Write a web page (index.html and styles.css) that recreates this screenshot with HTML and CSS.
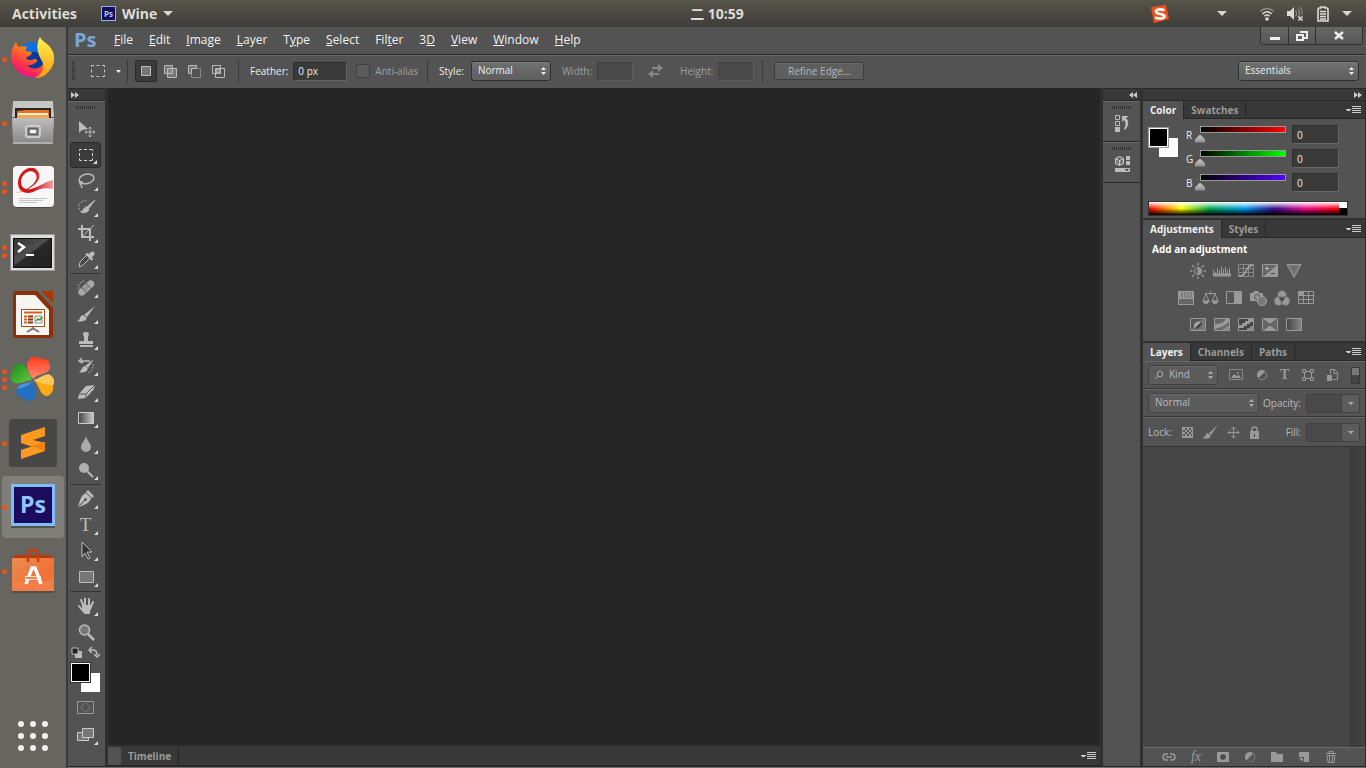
FILE: index.html
```html
<!DOCTYPE html>
<html lang="en">
<head>
  <meta charset="UTF-8">
  <meta name="viewport" content="width=device-width, initial-scale=1.0">
  <title>Photoshop</title>
  <link rel="stylesheet" href="styles.css">
</head>
<body>
  <!-- system bar -->
  <header class="topbar">
    <div class="topbar_left">
      <button class="top_btn">Activities</button>
      <button class="top_btn top_app">
        <svg width="15" height="15" viewBox="0 0 15 15"><rect x=".5" y=".5" width="14" height="14" fill="#170b5c" stroke="#7fb8f5"/><text x="3" y="11" font-size="8" font-weight="700" fill="#9ccbff">Ps</text></svg>
        Wine
        <svg width="10" height="5" viewBox="0 0 10 5"><path d="M0 0h10L5 5z" fill="#d8d6d0"/></svg>
      </button>
    </div>
    <div class="clock">二 10:59</div>
    <div class="topbar_right">
      <svg class="tray_sogou" width="18" height="18" viewBox="0 0 18 18"><path d="M0 2 15 0l3 14-15 4z" fill="#f0501e"/><path d="M13.5 5.200C9 3.500 4.500 4.500 5 7s8.500 1.500 8.500 4.200c0 2.300-5 3-9.500 1.300" fill="none" stroke="#fff" stroke-width="2.600"/></svg>
      <svg class="tray_caret" width="10" height="5" viewBox="0 0 10 5"><path d="M0 0h10L5 5z" fill="#d8d6d0"/></svg>
      <svg width="14" height="14" viewBox="0 0 14 14" fill="none" stroke-width="1.500"><path d="M.5 4.500c3.500-4 9.500-4 13 0" stroke="#8b8981"/><path d="M2.500 7c2.500-3 6.500-3 9 0M4.500 9.300c1.500-1.600 3.500-1.600 5 0" stroke="#dfdcd6"/><circle cx="7" cy="12" r="1.800" fill="#dfdcd6"/></svg>
      <svg width="17" height="16" viewBox="0 0 17 16" fill="none"><path d="M0 5h3l4-4v13l-4-4H0z" fill="#dfdcd6"/><path d="M8.500 4.500c1.500 2 1.500 4 0 6M11 2.500c2 3 2 6 0 9M13.500 1c2 3 2 6 1 8" stroke="#8b8981" stroke-width="1.300"/><path d="m11.500 10.500 4 4m0-4-4 4" stroke="#dfdcd6" stroke-width="1.600"/></svg>
      <svg width="12" height="16" viewBox="0 0 12 16" fill="none" stroke="#dfdcd6"><path d="M4 2V1h4v1h2l1 1v12H1V3l1-1z" stroke-width="1.600"/><path d="M3 5.500h6M3 8h6M3 10.500h6M3 13h6" stroke-width="1.300"/></svg>
      <svg width="10" height="5" viewBox="0 0 10 5"><path d="M0 0h10L5 5z" fill="#d8d6d0"/></svg>
    </div>
  </header>

  <div class="desktop">
    <!-- launcher -->
    <nav class="dock" aria-label="Launcher">
      <button class="dock_item" aria-label="Firefox">
        <span class="dots"><i></i></span>
        <svg width="48" height="48" viewBox="0 0 48 48">
          <defs>
            <linearGradient id="fx" x1=".8" y1="0" x2=".2" y2="1"><stop offset="0" stop-color="#ffd52e"/><stop offset=".4" stop-color="#ff7a1a"/><stop offset=".75" stop-color="#ff2b50"/><stop offset="1" stop-color="#d9108f"/></linearGradient>
            <linearGradient id="fy" x1="0" y1="0" x2="0" y2="1"><stop offset="0" stop-color="#fff44f"/><stop offset="1" stop-color="#ff9a10"/></linearGradient>
          </defs>
          <circle cx="24" cy="25" r="18" fill="#0a72e0"/><circle cx="25" cy="28" r="11" fill="#063a98"/>
          <path d="M2 22C2 15 5 10 7 7c1 2 1 4 3 5 3-1 6-1 8 0 0 1-2 2-1 4 2 1 5 0 6 2-1 3-4 3-6 5 2 3 5 2 9 1 3 0 3 3 0 4-2 1-4 3-8 2 5 6 17 5 18-7 1-7-5-11-4-18 5 4 13 11 13 22a22 22 0 0 1-43-5z" fill="url(#fx)"/>
          <path d="M31 2c1 4 10 7 13 15 3 8 0 17-8 23-4 3-8 3-10 3 8-4 10-12 7-17-4-6-7-16-2-24z" fill="url(#fy)"/>
        </svg>
      </button>
      <button class="dock_item" aria-label="Files">
        <span class="dots"><i></i></span>
        <svg width="48" height="48" viewBox="0 0 48 48">
          <defs><linearGradient id="fl" x1="0" y1="0" x2="0" y2="1"><stop offset="0" stop-color="#bdbdbd"/><stop offset="1" stop-color="#878787"/></linearGradient></defs>
          <path d="M4 3q0-1 1-1h38q1 0 1 1l1 15H3z" fill="#c6c6c4"/><path d="M6 9h36v10H6z" fill="#252525"/><path d="M8 12l8-1h24v7H8z" fill="#e8711f"/><path d="M9 14h30v5H9z" fill="#fff0d0"/><path d="M8 16h32v4H8z" fill="#f3a650"/>
          <path d="M3 19h42l-1 26H4z" fill="url(#fl)"/><path d="M4 44h40" stroke="#d5d5d5"/><rect x="17" y="27" width="14" height="11" rx="2" fill="#8e8e8e" stroke="#ccc" stroke-width="2"/><rect x="20" y="30" width="8" height="5" fill="#f3f3f3" stroke="#333"/>
        </svg>
      </button>
      <button class="dock_item" aria-label="Document Viewer">
        <span class="dots"><i></i><i></i></span>
        <svg width="48" height="48" viewBox="0 0 48 48">
          <defs><linearGradient id="ev"><stop offset="0" stop-color="#d80f12"/><stop offset=".5" stop-color="#cf1b1f"/><stop offset="1" stop-color="#f2a0a0"/></linearGradient></defs>
          <rect x="4" y="3" width="41" height="42" rx="5" fill="#4b4a46"/><rect x="4" y="3" width="41" height="41" rx="4" fill="#f6f6f6"/>
          <path d="M7 30c12-3 25-12 19-20-5-5-14 1-14 9 0 7 7 9 13 6 8-3 11-6 19-8v9c-9-2-14 0-20 3-8 3-15-1-15-9C9 8 22 1 28 7c9 10-8 21-21 23z" fill="url(#ev)"/>
          <path d="M10 35.500h28M10 37.500h24M10 39.500h18" stroke="#c6c6c6"/>
        </svg>
      </button>
      <button class="dock_item" aria-label="Terminal">
        <span class="dots"><i></i><i></i></span>
        <svg width="48" height="48" viewBox="0 0 48 48">
          <defs><linearGradient id="tm" x1="0" y1="0" x2="1" y2="1"><stop offset="0" stop-color="#333"/><stop offset=".45" stop-color="#505050"/><stop offset=".5" stop-color="#292929"/><stop offset="1" stop-color="#202020"/></linearGradient></defs>
          <rect x="1" y="7" width="45" height="37" fill="#999"/><rect x="2" y="8" width="43" height="35" fill="#dcdcdc"/><rect x="4" y="11" width="39" height="30" fill="#111"/><rect x="5" y="12" width="37" height="28" fill="url(#tm)"/>
          <path d="m9 16 6 4-6 5" fill="none" stroke="#fff" stroke-width="2.500"/><path d="M17 28h8" stroke="#fff" stroke-width="2"/>
        </svg>
      </button>
      <button class="dock_item" aria-label="Impress">
        <span class="dots"></span>
        <svg width="48" height="48" viewBox="0 0 48 48">
          <path d="M4 2q0-2 2-2h22l16 17v27q0 3-3 3H7q-3 0-3-3z" fill="#8c3107"/><path d="M32 0h12v12z" fill="#a43a03"/><path d="M7 4h19l14 15v25H7z" fill="#f7f5f2"/>
          <rect x="12.500" y="18.500" width="23" height="17" fill="#fff" stroke="#a64a18"/><path d="M15 21.500h18" stroke="#e05a18" stroke-width="2"/><path d="M15 25.500h3M15 28.500h3M15 31.500h3" stroke="#e05a18" stroke-width="2"/><path d="M19 25.500h5M19 28.500h5M19 31.500h5" stroke="#8c3107" stroke-width="2"/><path d="M26 25h7v7h-7z" fill="none" stroke="#888"/><path d="m27 30 2-2 2 1 2-3" fill="none" stroke="#2ca02c" stroke-width="1.500"/><path d="m18 41 5-3 1-1 1 1 5 3" fill="none" stroke="#777" stroke-width="2"/>
        </svg>
      </button>
      <button class="dock_item" aria-label="Clover">
        <span class="dots"><i></i><i></i><i></i></span>
        <svg width="48" height="48" viewBox="0 0 48 48">
          <defs>
            <linearGradient id="c1" x1="0" y1="0" x2="0" y2="1"><stop offset="0" stop-color="#ff3c1c"/><stop offset="1" stop-color="#ff8c70"/></linearGradient>
            <linearGradient id="c2" x1="0" y1="0" x2="1" y2="1"><stop offset="0" stop-color="#129010"/><stop offset="1" stop-color="#6cc84c"/></linearGradient>
          </defs>
          <path d="M24 24C19 18 16 9 20 5c3-4 8-4 11-1 6-2 11 3 10 9-2 7-12 5-17 11z" fill="url(#c1)"/>
          <path d="M23 25C20 18 17 10 12 9 7 8 3 12 4 17c-4 2-3 9 1 11 6 2 13-3 18-3z" fill="url(#c2)"/>
          <path d="M25 25c5-1 11-7 16-5 4 2 5 7 3 11 1 5-2 9-6 10-7 0-7-10-13-16z" fill="#fbab16"/><path d="M25 25c5-1 11-7 16-5 4 2 5 7 3 10-7-1-13-1-19-5z" fill="#ffc65a"/>
          <path d="M24 26c-6 3-15 2-16 8-2 5 2 8 6 9 3 4 10 4 12 0 3-5-2-11-2-17z" fill="#236fc4"/><path d="M24 26c-6 3-15 2-16 8 7-1 12-3 16-8z" fill="#4b91dd"/>
        </svg>
      </button>
      <button class="dock_item" aria-label="Sublime Text">
        <span class="dots"><i></i></span>
        <svg width="48" height="48" viewBox="0 0 48 48">
          <rect width="48" height="48" rx="3" fill="#474747"/><path d="m12 31 24-8v9l-24 8z" fill="#ff9920"/><path d="m12 16 24-8v9l-12 4 12 3v8l-24-8z" fill="#ff9920"/><path d="m22 27 14-4v9z" fill="#e98510"/>
        </svg>
      </button>
      <button class="dock_item dock_on" aria-label="Photoshop">
        <span class="dots"><i></i></span>
        <svg width="48" height="48" viewBox="0 0 48 48">
          <rect x="2" y="2" width="44" height="43" fill="#55534e"/><rect x="2" y="1" width="44" height="42" fill="#7fbcfb"/><rect x="5" y="4" width="38" height="36" fill="#1b0c5d"/><text x="11" y="30" font-size="23" font-weight="700" fill="#8ec6ff">Ps</text>
        </svg>
      </button>
      <button class="dock_item" aria-label="Software">
        <span class="dots"><i></i></span>
        <svg width="48" height="48" viewBox="0 0 48 48">
          <defs><linearGradient id="sw" x1="0" y1="0" x2="1" y2="1"><stop offset="0" stop-color="#e88f51"/><stop offset=".6" stop-color="#f17135"/><stop offset="1" stop-color="#f0793f"/></linearGradient></defs>
          <path d="M3 44h42v2H3z" fill="#514f4a"/><path d="m3 11 4-3h34l4 3z" fill="#b8380a"/><path d="M3 11h42v33H3z" fill="url(#sw)"/>
          <path d="M19 15V7q0-4 5-4t5 4v8" fill="none" stroke="#c43f10" stroke-width="2.500"/><path d="M3 34h42v10H3z" fill="#f58450" opacity=".6"/>
          <path d="m17 37 6-16h3l6 16M16 31h16" fill="none" stroke="#fff" stroke-width="3.500"/><path d="M17 31h11" stroke="#e85a18" stroke-width="1.500"/>
        </svg>
      </button>
      <button class="dock_apps" aria-label="Show Applications">
        <i></i><i></i><i></i><i></i><i></i><i></i><i></i><i></i><i></i>
      </button>
    </nav>

    <main class="app">
      <!-- menu -->
      <div class="menubar">
        <span class="logo">Ps</span>
        <nav class="menu">
          <a href="#"><u>F</u>ile</a>
          <a href="#"><u>E</u>dit</a>
          <a href="#"><u>I</u>mage</a>
          <a href="#"><u>L</u>ayer</a>
          <a href="#">T<u>y</u>pe</a>
          <a href="#"><u>S</u>elect</a>
          <a href="#">Fil<u>t</u>er</a>
          <a href="#">3<u>D</u></a>
          <a href="#"><u>V</u>iew</a>
          <a href="#"><u>W</u>indow</a>
          <a href="#"><u>H</u>elp</a>
        </nav>
        <div class="win_btns">
          <button aria-label="Minimize"><svg width="12" height="12"><path d="M1 7h10v3H1z" fill="#eee"/></svg></button>
          <button aria-label="Restore"><svg width="12" height="12" fill="none" stroke="#eee" stroke-width="2"><path d="M5 3V2h6v6H8M1 5h6v5H1z"/></svg></button>
          <button class="win_close" aria-label="Close"><svg width="12" height="12" stroke="#eee" stroke-width="2.500"><path d="m2 2 8 7m0-7-8 7"/></svg></button>
        </div>
      </div>

      <!-- options -->
      <div class="options">
        <span class="grip_v"></span>
        <button class="opt_tool" aria-label="Tool preset">
          <svg width="16" height="16" fill="none" stroke="#ccc"><path d="M1.500 4V2.500H4M6.500 2.500h3M12 2.500h2.500V4M14.500 6.500v3M14.500 12v1.500H12M9.500 13.500h-3M4 13.500H1.500V12M1.500 9.500v-3"/></svg>
          <svg width="5" height="3"><path d="M0 0h5L2.500 3z" fill="#eee"/></svg>
        </button>
        <div class="modes">
          <button class="on" aria-label="New selection"><svg width="14" height="14"><path d="M2.500 2.500h9v9h-9z" fill="#777" stroke="#bbb"/></svg></button>
          <button aria-label="Add to selection"><svg width="14" height="14" stroke="#bbb"><path d="M1.500 1.500h8v3h4v9h-9v-4h-3z" fill="#777"/><path d="M4.500 9.500v-5h5v5z" fill="#888"/></svg></button>
          <button aria-label="Subtract from selection"><svg width="14" height="14" fill="none"><path d="M9.500 4.500h4v9h-9v-4" stroke="#888"/><path d="M4.500 9.500h-3v-8h8v3h-5z" fill="#777" stroke="#bbb"/></svg></button>
          <button aria-label="Intersect with selection"><svg width="14" height="14" fill="none" stroke="#bbb"><path d="M1.500 1.500h8v8h-8zM4.500 4.500h9v9h-9z"/><path d="M5 5h4v4H5z" fill="#888"/></svg></button>
        </div>
        <label class="opt_label" for="feather">Feather:</label>
        <input class="field feather" id="feather" type="text" value="0 px">
        <label class="check off"><input type="checkbox" disabled>Anti-alias</label>
        <span class="vsep"></span>
        <label class="opt_label" for="style">Style:</label>
        <select class="select style_select" id="style"><option>Normal</option></select>
        <label class="opt_label off" for="w">Width:</label>
        <input class="field size" id="w" type="text" disabled>
        <button class="swap" aria-label="Swap width and height" disabled><svg width="15" height="14" fill="#888"><path d="M4 3h6V0l5 4-5 4V5H4zM11 11H5v3l-5-4 5-4v3h6z"/></svg></button>
        <label class="opt_label off" for="h">Height:</label>
        <input class="field size" id="h" type="text" disabled>
        <span class="vsep vsep_near"></span>
        <button class="refine" disabled>Refine Edge...</button>
        <select class="select workspace_select" aria-label="Workspace"><option>Essentials</option></select>
      </div>

      <div class="workspace">
        <!-- toolbox -->
        <aside class="toolbox">
          <div class="dock_head"><svg width="8" height="6" fill="#ccc"><path d="M0 0l4 3-4 3zM4 0l4 3-4 3z"/></svg></div>
          <div class="tool_body">
            <span class="grip_h"></span>
            <div class="tools">
              <button class="tool plain" aria-label="Move"><svg width="20" height="20"><path d="M3 2v12l3-3 6-1z" fill="#bbb"/><path d="M14 8v10M9 13h10M12.500 9.500 14 8l1.500 1.500M12.500 16.500 14 18l1.500-1.500M10.500 11.500 9 13l1.500 1.500M17.500 11.500 19 13l-1.500 1.500" fill="none" stroke="#bbb"/></svg></button>
              <button class="tool on" aria-label="Marquee"><svg width="20" height="20" fill="none" stroke="#ccc"><path d="M3.500 6V4.500H6M8 4.500h3M13 4.500h3.500V6M16.500 8v3M16.500 13v2.500H13M11 15.500H8M6 15.500H3.500V13M3.500 11V8"/></svg></button>
              <button class="tool" aria-label="Lasso"><svg width="20" height="20" fill="none" stroke="#bbb" stroke-width="1.500"><ellipse cx="10.500" cy="8" rx="7.500" ry="4.700" transform="rotate(-12 10 8)"/><path d="M4 10c-2 2 2 4 2 1-2-1-3 2-1 3l1 3"/></svg></button>
              <button class="tool" aria-label="Quick Selection"><svg width="20" height="20"><path d="M10 4c-4-1-8 2-7 7 0 3 3 5 6 5" fill="none" stroke="#bbb" stroke-dasharray="1.500 1.500"/><path d="m19 3-6 8-2-1zM11 10l2 2c-1 4-5 4-8 3 3-1 2-5 6-5z" fill="#bbb" stroke="#bbb"/></svg></button>
              <button class="tool" aria-label="Crop"><svg width="20" height="20" fill="none" stroke="#bbb" stroke-width="2"><path d="M6 2v12h12M2 6h12v12"/><path d="m6 14 12-12" stroke-width="1"/></svg></button>
              <button class="tool" aria-label="Eyedropper"><svg width="20" height="20"><path d="m11 6-7 7-1 5 4-2 7-7" fill="#444" stroke="#bbb"/><path d="m9 5 2-1 2 1c2-3 4-3 5-2s1 3-2 5l1 2-1 2z" fill="#bbb"/></svg></button>
            </div>
            <div class="tools">
              <button class="tool" aria-label="Spot Healing"><svg width="20" height="20"><path d="M8 3c-5 1-7 6-4 11" fill="none" stroke="#bbb" stroke-dasharray="1.500 1.500"/><g transform="rotate(-43 11 10)"><rect x="1" y="6" width="19" height="7" rx="3.500" fill="#aaa"/><path d="M7.500 6v7M13.500 6v7" stroke="#666"/><path d="M9 8.500h3M9 10.500h3" stroke="#555" stroke-dasharray="1 1"/></g></svg></button>
              <button class="tool" aria-label="Brush"><svg width="20" height="20" fill="#bbb"><path d="m19 2-8 11-3-2zM7 11l4 3c-2 4-6 4-10 3 4-1 2-5 6-6z"/></svg></button>
              <button class="tool" aria-label="Clone Stamp"><svg width="20" height="20" fill="#bbb"><path d="M10 2c4 0 3 3 2 5v4h5v3H3v-3h5V7C7 5 6 2 10 2zM4 15h13v2H4z"/></svg></button>
              <button class="tool" aria-label="History Brush"><svg width="20" height="20"><path d="M3 5h11M6 2 3 5l4 2" fill="none" stroke="#bbb" stroke-width="1.500"/><path d="m18 3-6 9-3-2zM9 10l3 3c-2 4-6 4-9 3 3-1 2-5 6-6z" fill="#bbb"/><path d="M17 8c0 5-1 7-5 9" fill="none" stroke="#bbb" stroke-dasharray="1.500 1.500"/></svg></button>
              <button class="tool" aria-label="Eraser"><svg width="20" height="20"><path d="m10 4 9-1-1 4-8 9-8 1 1-5z" fill="#bbb"/><path d="M3 12h7l9-9M10 12v4" fill="none" stroke="#555"/></svg></button>
              <button class="tool" aria-label="Gradient"><svg width="20" height="20"><defs><linearGradient id="gr"><stop offset="0" stop-color="#444"/><stop offset="1" stop-color="#ccc"/></linearGradient></defs><path d="M2.500 4.500h15v11h-15z" fill="url(#gr)" stroke="#ccc"/></svg></button>
              <button class="tool" aria-label="Blur"><svg width="20" height="20"><path d="M10 2c1 5 5 7 5 11a5 5 0 0 1-10 0c0-4 4-6 5-11z" fill="#aaa"/></svg></button>
              <button class="tool" aria-label="Dodge"><svg width="20" height="20"><circle cx="8" cy="8" r="5" fill="#b0b0b0"/><path d="m11 11 6 6" stroke="#bbb" stroke-width="2"/></svg></button>
            </div>
            <div class="tools">
              <button class="tool" aria-label="Pen"><svg width="20" height="20"><path d="m12 1 6 6-2 2-6-6zM10 4l5 5c-1 5-6 7-13 9C4 11 5 6 10 4z" fill="#bbb"/><path d="m3 17 6-6" stroke="#444"/><circle cx="9.500" cy="10.500" r="1.200" fill="#444"/></svg></button>
              <button class="tool type_tool" aria-label="Type">T</button>
              <button class="tool" aria-label="Path Selection"><svg width="20" height="20"><path d="M6 1v15l3-4 3 6 2-1-3-6h5z" fill="#333" stroke="#bbb"/></svg></button>
              <button class="tool" aria-label="Rectangle"><svg width="20" height="20"><path d="M3.500 4.500h14v11h-14z" fill="#777" stroke="#bbb"/></svg></button>
            </div>
            <div class="tools">
              <button class="tool" aria-label="Hand"><svg width="20" height="20" fill="none" stroke="#bbb" stroke-width="2" stroke-linecap="round"><path d="M3 10l4 5M5 4l3 7M9 2.500V10M13 3v8M17 6l-3 7"/><path d="M7 10h7l-1 7H9l-2-3z" fill="#bbb"/></svg></button>
              <button class="tool plain" aria-label="Zoom"><svg width="20" height="20"><path d="m12 12 6 6" stroke="#bbb" stroke-width="2.500"/><circle cx="8.500" cy="8" r="5" fill="#777" stroke="#bbb" stroke-width="1.500"/></svg></button>
            </div>
            <div class="mini">
              <button aria-label="Default colors"><svg width="11" height="11"><path d="M4 4h7v7H4z" fill="#bbb"/><path d="M1 1h6v6H1z" fill="#222" stroke="#bbb"/></svg></button>
              <button aria-label="Swap colors"><svg width="12" height="12" fill="none" stroke="#bbb" stroke-width="1.500"><path d="M2 4h3q4 0 4 5M4 1 1 4l3 3M6 8l3 3 3-3"/></svg></button>
            </div>
            <div class="swatches"><span class="sw_bg"></span><span class="sw_fg"></span></div>
            <button class="mask" aria-label="Quick Mask"><svg width="17" height="13" fill="none" stroke="#999"><path d="M.5.5h16v12H.5z"/><circle cx="8.500" cy="6.500" r="4" stroke-dasharray="1.300 1.200"/></svg></button>
            <button class="tool screen" aria-label="Screen Mode"><svg width="20" height="20" fill="#777" stroke="#ccc"><path d="M1.500 7.500h11v8h-11z"/><path d="M6.500 3.500h11v9h-11z"/></svg></button>
          </div>
        </aside>

        <!-- document area -->
        <section class="center">
          <div class="canvas"></div>
          <div class="timeline">
            <span class="timeline_edge"></span>
            <button class="tab">Timeline</button>
            <button class="panel_menu" aria-label="Panel menu"></button>
          </div>
        </section>

        <!-- collapsed panels -->
        <aside class="icon_panels">
          <div class="dock_head right"><svg width="8" height="6" fill="#ccc"><path d="M4 0 0 3l4 3zM8 0 4 3l4 3z"/></svg></div>
          <div class="icon_group">
            <span class="grip_h"></span>
            <button aria-label="History"><svg width="18" height="20"><path d="M2.500 2.500h4v4h-4zM2.500 8.500h4v4h-4z" fill="none" stroke="#bbb"/><path d="M2 14h5v5H2z" fill="#bbb"/><path d="M9 3h7L13 5q5 5-1 12l-1-1q3-6 0-9L9 9z" fill="#bbb"/></svg></button>
          </div>
          <div class="icon_group">
            <span class="grip_h"></span>
            <button aria-label="Properties"><svg width="18" height="20"><path d="m6.500 2.500 4 2v5l-4 2-4-2v-5zM2.500 4.500l4 2 4-2M6.500 6.500v5" fill="#777" stroke="#ccc"/><path d="M13 2h4v4h-4zM13 7h4v4h-4zM2 14h15v4H2z" fill="#bbb"/><path d="M12 15h4l-2 2z" fill="#333"/></svg></button>
          </div>
        </aside>

        <!-- panels -->
        <aside class="panels">
          <div class="dock_head right"><svg width="8" height="6" fill="#ccc"><path d="M0 0l4 3-4 3zM4 0l4 3-4 3z"/></svg></div>

          <section class="panel">
            <div class="tabs">
              <button class="tab on">Color</button>
              <button class="tab">Swatches</button>
              <button class="panel_menu" aria-label="Panel menu"></button>
            </div>
            <div class="color_body">
              <div class="swatches"><span class="sw_bg"></span><span class="sw_fg framed"></span></div>
              <div class="channels">
                <div class="channel"><label for="r">R</label><input class="range red" id="r" type="range" max="255" value="0"><input class="field" type="text" value="0" aria-label="Red value"></div>
                <div class="channel"><label for="g">G</label><input class="range green" id="g" type="range" max="255" value="0"><input class="field" type="text" value="0" aria-label="Green value"></div>
                <div class="channel"><label for="b">B</label><input class="range blue" id="b" type="range" max="255" value="0"><input class="field" type="text" value="0" aria-label="Blue value"></div>
              </div>
            </div>
            <div class="spectrum"><span class="ramp"></span><span class="bw"></span></div>
          </section>

          <section class="panel adjust">
            <div class="tabs">
              <button class="tab on">Adjustments</button>
              <button class="tab">Styles</button>
              <button class="panel_menu" aria-label="Panel menu"></button>
            </div>
            <h2>Add an adjustment</h2>
            <div class="adj_row">
              <button aria-label="Brightness/Contrast"><svg width="16" height="16" fill="none" stroke="#999"><circle cx="8" cy="8" r="3.500"/><path d="M8 4.500a3.500 3.500 0 0 1 0 7z" fill="#999"/><path d="M8 0v2.500M8 13.500V16M0 8h2.500M13.500 8H16M2.300 2.300l2 2M11.700 11.700l2 2M2.300 13.700l2-2M11.700 4.300l2-2" stroke-width="1.500"/></svg></button>
              <button aria-label="Levels"><svg width="18" height="16" fill="none" stroke="#999"><path d="M0 12h18" stroke-width="3"/><path d="M.5 7v4M2.500 9v2M4.500 5v6M6.500 7v4M8.500 3v8M10.500 6v5M12.500 4v7M14.500 7v4M16.500 5v6"/></svg></button>
              <button aria-label="Curves"><svg width="16" height="16" fill="none" stroke="#888"><path d="M.5 1.500h15v12H.5zM.5 5.500h15M.5 9.500h15M5.500 1.500v12M10.500 1.500v12"/><path d="M1 13c9 0 6-11 14-11" stroke="#aaa" stroke-width="1.500"/></svg></button>
              <button aria-label="Exposure"><svg width="16" height="16"><path d="M.5 1.500h15v12H.5z" fill="#666" stroke="#999"/><path d="M15 2v12H1z" fill="#999"/><path d="M3 5.500h4M5 3.500v4" stroke="#bbb"/><path d="M9 10.500h4" stroke="#444"/></svg></button>
              <button aria-label="Vibrance"><svg width="16" height="16"><path d="M1 1.500h14L8 14.500z" fill="#777" stroke="#999"/><path d="M5 4h6l-3 4z" fill="#666"/></svg></button>
            </div>
            <div class="adj_row">
              <button aria-label="Hue/Saturation"><svg width="16" height="16"><path d="M0 1h16v14H0z" fill="#999"/><path d="M1 9h14v5H1z" fill="#666"/><path d="M4 2v6M7 2v6M10 2v6M13 2v6" stroke="#666"/></svg></button>
              <button aria-label="Color Balance"><svg width="17" height="16" fill="none" stroke="#999"><path d="M3 3.500h11M8.500 1v4M4 4l-3 7h6zM13 4l-3 7h6z"/><path d="M1 11h6q-1 3-3 3t-3-3zM10 11h6q-1 3-3 3t-3-3z" fill="#999"/></svg></button>
              <button aria-label="Black and White"><svg width="16" height="16"><path d="M.5 1.500h15v12H.5z" fill="#555" stroke="#999"/><path d="M8 2h8v12H8z" fill="#999"/></svg></button>
              <button aria-label="Photo Filter"><svg width="17" height="16"><path d="M0 3h3l1-2h4l1 2h4v8H0z" fill="#999"/><circle cx="7" cy="7" r="2.500" fill="none" stroke="#555"/><circle cx="12" cy="11" r="4.500" fill="#777" stroke="#aaa"/></svg></button>
              <button aria-label="Channel Mixer"><svg width="16" height="16" fill="#999" stroke="#666"><circle cx="8" cy="5" r="4.500"/><circle cx="4.500" cy="11" r="4.500"/><circle cx="11.500" cy="11" r="4.500"/><path d="m5 8 3-1 3 1-3 4z" fill="#444"/></svg></button>
              <button aria-label="Color Lookup"><svg width="16" height="16" fill="none" stroke="#999"><path d="M.5 1.500h15v12H.5zM.5 5.500h15M.5 9.500h15M5.500 1.500v12M10.500 1.500v12"/><path d="M1 2h4v3H1z" fill="#999"/></svg></button>
            </div>
            <div class="adj_row">
              <button aria-label="Invert"><svg width="16" height="16"><path d="M.5 1.500h15v12H.5z" fill="#777" stroke="#999"/><path d="M1 13V2h12z" fill="#555"/><path d="M4 11q-1-7 8-7l-8 8z" fill="#aaa"/><path d="m12 4-8 8q8 0 8-8z" fill="#444"/></svg></button>
              <button aria-label="Posterize"><svg width="16" height="16"><path d="M.5 1.500h15v12H.5z" fill="#666" stroke="#999"/><path d="M1 7q8 0 11-5h3v3Q10 10 1 12z" fill="#999"/><path d="m7 13 8-5v5z" fill="#888"/></svg></button>
              <button aria-label="Threshold"><svg width="16" height="16"><path d="M.5 1.500h15v12H.5z" fill="#444" stroke="#999"/><path d="M1 8h3V6h3V4h3V2h5v3h-3v2H9v2H6v2H1z" fill="#999"/><path d="M9 13v-2h3V9h3v4z" fill="#888"/></svg></button>
              <button aria-label="Selective Color"><svg width="16" height="16"><path d="M.5 1.500h15v12H.5z" fill="#666" stroke="#999"/><path d="m1 2 7 6 7-6zM1 13l7-5 7 5z" fill="#999"/><path d="m1 2 14 11M15 2 1 13" stroke="#555"/></svg></button>
              <button aria-label="Gradient Map"><svg width="16" height="16"><defs><linearGradient id="gm"><stop offset="0" stop-color="#444"/><stop offset="1" stop-color="#888"/></linearGradient></defs><path d="M.5 1.500h15v12H.5z" fill="url(#gm)" stroke="#999"/></svg></button>
            </div>
          </section>

          <section class="panel layers">
            <div class="tabs">
              <button class="tab on">Layers</button>
              <button class="tab">Channels</button>
              <button class="tab">Paths</button>
              <button class="panel_menu" aria-label="Panel menu"></button>
            </div>
            <div class="layer_row">
              <div class="kind">
                <svg class="kind_icon" width="10" height="10" fill="none" stroke="#aaa"><circle cx="6" cy="4" r="2.800"/><path d="M4 6 1 9"/></svg>
                <select class="select dim" aria-label="Filter type" disabled><option>Kind</option></select>
              </div>
              <div class="filters">
                <button aria-label="Pixel layers"><svg width="14" height="12"><path d="M.5.500h13v10H.5z" fill="none" stroke="#888"/><path d="M2 9l3-4 3 2 2-1 2 3z" fill="#999"/><circle cx="9" cy="4" r="1" fill="#999"/></svg></button>
                <button aria-label="Adjustment layers"><svg width="12" height="12"><circle cx="6" cy="6" r="5" fill="#999"/><path d="M9 2.500 2.500 9A4.500 4.500 0 0 0 9 2.500z" fill="#555"/></svg></button>
                <button class="filter_type" aria-label="Type layers">T</button>
                <button aria-label="Shape layers"><svg width="12" height="12" fill="#555" stroke="#999"><path d="M2.500 2.500h7v7h-7z"/><path d="M.5.500h3v3h-3zM8.500.500h3v3h-3zM.5 8.500h3v3h-3zM8.500 8.500h3v3h-3z"/></svg></button>
                <button aria-label="Smart objects"><svg width="12" height="13"><path d="M4.500 5V.5h4l3 3v7H7M8 .500v4h3.500" fill="none" stroke="#999"/><path d="M1 6h5v6H1z" fill="#999"/></svg></button>
                <button class="toggle" aria-label="Toggle filtering"></button>
              </div>
            </div>
            <div class="layer_row">
              <select class="select dim blend" aria-label="Blend mode" disabled><option>Normal</option></select>
              <label class="dim_label" for="opacity">Opacity:</label>
              <div class="combo"><input id="opacity" type="text" disabled><button aria-label="Opacity slider" disabled></button></div>
            </div>
            <div class="layer_row lock_row">
              <span class="dim_label">Lock:</span>
              <div class="locks">
                <button aria-label="Lock transparent pixels"><svg width="11" height="11"><path d="M0 0h11v11H0z" fill="#999"/><path d="M3 1h2v2H3zM7 1h2v2H7zM1 3h2v2H1zM5 3h2v2H5zM3 5h2v2H3zM7 5h2v2H7zM1 7h2v2H1zM5 7h2v2H5zM9 3h1v2H9zM9 7h1v2H9z" fill="#555"/></svg></button>
                <button aria-label="Lock image pixels"><svg width="16" height="14" fill="#999"><path d="m16 0-7 10-2-2zM6 8l3 3c-1 3-5 3-9 2 4-1 3-4 6-5z"/></svg></button>
                <button aria-label="Lock position"><svg width="13" height="13" fill="none" stroke="#999"><path d="M6.500 1v11M1 6.500h11M4.500 3l2-2 2 2M4.500 10l2 2 2-2M3 4.500l-2 2 2 2M10 4.500l2 2-2 2"/></svg></button>
                <button aria-label="Lock all"><svg width="11" height="13"><path d="M3 6V3q0-2 2.500-2T8 3v3" fill="none" stroke="#999" stroke-width="1.500"/><path d="M1 5h9v8H1z" fill="#999"/><path d="M5 8h1v3H5z" fill="#444"/></svg></button>
              </div>
              <label class="dim_label" for="fill">Fill:</label>
              <div class="combo"><input id="fill" type="text" disabled><button aria-label="Fill slider" disabled></button></div>
            </div>
            <div class="layer_list"><span class="scrollbar"></span></div>
            <div class="layer_foot">
              <button aria-label="Link layers"><svg width="14" height="12" fill="none" stroke="#999" stroke-width="1.500"><path d="M6 3H4a3 3 0 0 0 0 6h2M8 3h2a3 3 0 0 1 0 6H8M4 6h6"/></svg></button>
              <button class="fx" aria-label="Layer style">fx</button>
              <button aria-label="Add mask"><svg width="14" height="12"><path d="M1 1h12v10H1z" fill="#999"/><circle cx="7" cy="6" r="2.800" fill="#484848"/></svg></button>
              <button aria-label="New adjustment layer"><svg width="14" height="12"><circle cx="7" cy="6" r="5" fill="#999"/><path d="m10 2.500-6.500 7A4.700 4.700 0 0 0 10 2.500z" fill="#555"/></svg></button>
              <button aria-label="New group"><svg width="14" height="12"><path d="M1 1h5l1 2h6v8H1z" fill="#999"/></svg></button>
              <button aria-label="New layer"><svg width="14" height="12"><path d="M2 1h10v10H7V6H2z" fill="#999"/><path d="M2 7h4v4z" fill="#999"/></svg></button>
              <button aria-label="Delete layer"><svg width="14" height="12" fill="none" stroke="#999"><path d="M2 2.500h10M5 2V.500h4V2M3 4.500h8l-1 7H4zM5.500 5v6M8.500 5v6"/></svg></button>
            </div>
          </section>
        </aside>
      </div>
    </main>
  </div>
</body>
</html>
```
FILE: styles.css
```css
* {
  box-sizing: border-box;
}
body {
  display: flex;
  flex-direction: column;
  height: 100vh;
  margin: 0;
  overflow: hidden;
  background: #535353;
  color: #eee;
  font: 10px/14px "Open Sans", "Noto Sans CJK SC", sans-serif;
}
button {
  display: flex;
  align-items: center;
  justify-content: center;
  padding: 0;
  border: 0;
  color: inherit;
  font: inherit;
  background: transparent;
}
input,
select {
  margin: 0;
  color: inherit;
  font: inherit;
}
svg {
  display: block;
  flex: none;
}

/* system bar */
.topbar {
  display: grid;
  grid-template-columns: 1fr auto 1fr;
  align-items: center;
  flex: none;
  height: 27px;
  color: #dfdcd6;
  font-size: 14px;
  font-weight: 700;
  background: linear-gradient(#57544b, #3e3d38);
}
.topbar_left,
.topbar_right {
  display: flex;
  align-items: center;
}
.topbar_left {
  gap: 24px;
  padding-left: 12px;
}
.top_app {
  gap: 6px;
}
.clock {
  padding-left: 68px;
}
.topbar_right {
  justify-content: flex-end;
  gap: 13px;
  padding-right: 14px;
}
.tray_sogou {
  margin-right: 35px;
}
.tray_caret {
  margin-right: 20px;
}

.desktop {
  display: flex;
  flex: 1;
  min-height: 0;
}

/* launcher */
.dock {
  display: flex;
  flex-direction: column;
  flex: none;
  width: 66px;
  padding-top: 1px;
  background: #66655f;
}
.dock_item {
  justify-content: flex-start;
  gap: 1px;
  width: 62px;
  height: 62px;
  margin: 0 2px 2px;
  border-radius: 4px;
}
.dock_on {
  background: #817f7a;
}
.dots {
  display: flex;
  flex-direction: column;
  gap: 3px;
  width: 6px;
}
.dots i {
  width: 5px;
  height: 5px;
  border-radius: 50%;
  background: #e95420;
}
.dock_apps {
  display: grid;
  grid-template-columns: repeat(3, 6px);
  gap: 6px;
  margin: auto 0 17px;
}
.dock_apps i {
  width: 6px;
  height: 6px;
  border-radius: 50%;
  background: #f2f1ef;
}

/* application frame */
.app {
  display: flex;
  flex-direction: column;
  flex: 1;
  min-width: 0;
  border-left: 2px solid #3a3a3a;
  border-bottom: 1px solid #707070;
}
.menubar {
  display: flex;
  align-items: center;
  flex: none;
  height: 28px;
  padding: 0 3px 2px 6px;
  border-bottom: 1px solid #282828;
}
.logo {
  width: 40px;
  color: #7da5d8;
  font-size: 20px;
  font-weight: 700;
}
.menu {
  display: flex;
  gap: 16px;
  font-size: 12px;
}
.menu a {
  color: #f2f2f2;
  text-decoration: none;
}
.win_btns {
  display: flex;
  align-self: flex-start;
  margin-left: auto;
  border: 1px solid #303030;
  border-top: 0;
  border-radius: 0 0 3px 3px;
}
.win_btns button {
  width: 27px;
  height: 17px;
  background: linear-gradient(#676767, #565656);
}
.win_btns button + button {
  border-left: 1px solid #303030;
}
.win_btns .win_close {
  width: 47px;
}

/* options bar */
.options {
  display: flex;
  align-items: center;
  flex: none;
  height: 33px;
  padding: 0 7px 2px 4px;
  border-top: 1px solid #6a6a6a;
}
.grip_v {
  width: 3px;
  height: 20px;
  background: repeating-linear-gradient(#333 0 1px, #535353 1px 2px);
}
.opt_tool {
  gap: 10px;
  margin-left: 15px;
}
.modes {
  display: flex;
  gap: 2px;
  height: 23px;
  margin-left: 6px;
  padding: 0 9px 0 7px;
  border-left: 1px solid #3a3a3a;
  border-right: 1px solid #3a3a3a;
}
.modes button {
  width: 22px;
  height: 22px;
}
.modes .on {
  border: 1px solid #2a2a2a;
  border-radius: 2px;
  background: #3b3b3b;
}
.opt_label {
  margin-left: 11px;
}
.off {
  color: #a0a0a0;
}
.field {
  height: 19px;
  padding: 0 4px;
  border: 1px solid #2f2f2f;
  border-bottom-color: #666;
  border-right-color: #666;
  background: #3a3a3a;
}
.field:disabled {
  border-color: #404040 #5d5d5d #5d5d5d #404040;
  background: #4a4a4a;
}
.feather {
  width: 54px;
  margin-left: 5px;
}
.check {
  display: flex;
  align-items: center;
  gap: 5px;
  margin-left: 9px;
}
.check input {
  width: 14px;
  height: 14px;
  border: 1px solid #404040;
  border-radius: 2px;
  background: #5b5b5b;
  appearance: none;
}
.vsep {
  width: 1px;
  height: 23px;
  margin-left: 9px;
  background: #3a3a3a;
}
.select {
  height: 20px;
  padding: 0 18px 2px 6px;
  border: 1px solid #303030;
  border-radius: 3px;
  background:
    url("data:image/svg+xml,%3Csvg xmlns='http://www.w3.org/2000/svg' width='5' height='8'%3E%3Cpath d='M0 3h5L2.500 0zM0 5h5L2.500 8z' fill='%23eee'/%3E%3C/svg%3E") right 4px center no-repeat,
    linear-gradient(#707070, #5e5e5e);
  box-shadow: inset 0 1px #808080;
  appearance: none;
}
.style_select {
  width: 80px;
  margin-left: 7px;
}
.size {
  width: 36px;
  margin-left: 5px;
}
.swap {
  margin: 0 6px 0 15px;
}
.vsep_near {
  margin: 0 11px 0 8px;
}
.refine {
  width: 90px;
  height: 18px;
  border: 1px solid #3e3e3e;
  border-radius: 2px;
  color: #b8b8b8;
  background: #5e5e5e;
  box-shadow: inset 0 1px #6c6c6c;
}
.workspace_select {
  width: 121px;
  margin-left: auto;
}

/* workspace */
.workspace {
  display: flex;
  flex: 1;
  min-height: 0;
  border-bottom: 1px solid #282828;
}
.dock_head {
  display: flex;
  align-items: center;
  flex: none;
  height: 13px;
  padding: 0 3px;
  border-top: 1px solid #282828;
  border-bottom: 1px solid #282828;
  background: #383838;
}
.dock_head.right {
  justify-content: flex-end;
}
.grip_h {
  width: 20px;
  height: 3px;
  background: repeating-linear-gradient(90deg, #333 0 1px, #535353 1px 2px);
}
.toolbox {
  display: flex;
  flex-direction: column;
  flex: none;
  width: 40px;
  border-right: 3px solid #303030;
}
.tool_body {
  display: flex;
  flex-direction: column;
  align-items: center;
  flex: 1;
  padding: 4px 2px 0 0;
  border-top: 1px solid #6a6a6a;
}
.tool_body .grip_h {
  margin-bottom: 7px;
}
.tools + .tools {
  margin-top: 1px;
  padding-top: 1px;
  border-top: 1px solid #353535;
}
.tool {
  position: relative;
  width: 31px;
  height: 26px;
}
.tool.on {
  border: 1px solid #2a2a2a;
  border-radius: 3px;
  background: #3b3b3b;
}
.tool::after {
  content: "";
  position: absolute;
  right: 3px;
  bottom: 3px;
  border: 2px solid;
  border-color: transparent #ddd #ddd transparent;
}
.tool.plain::after {
  display: none;
}
.type_tool {
  color: #bbb;
  font: 19px/20px "Liberation Serif", serif;
}
.mini {
  display: flex;
  justify-content: space-between;
  width: 29px;
  margin: 1px 0 5px;
}
.swatches {
  position: relative;
  flex: none;
  width: 29px;
  height: 29px;
}
.sw_fg,
.sw_bg {
  position: absolute;
  width: 19px;
  height: 19px;
  border: 1px solid #fff;
}
.sw_fg {
  top: 0;
  left: 0;
  background: #000;
  outline: 1px solid #333;
}
.sw_fg.framed {
  outline-color: #999;
}
.sw_bg {
  right: 0;
  bottom: 0;
  background: #fff;
}
.mask {
  margin: 9px 0 8px;
}

.center {
  display: flex;
  flex-direction: column;
  flex: 1;
  min-width: 0;
}
.canvas {
  flex: 1;
  background: #262626;
}
.timeline {
  display: flex;
  height: 21px;
  border-top: 2px solid #333;
  border-bottom: 1px solid #282828;
  background: #383838;
}
.timeline_edge {
  width: 13px;
  background: #535353;
}
.timeline .tab {
  padding: 0 7px;
}

.icon_panels {
  display: flex;
  flex-direction: column;
  flex: none;
  width: 43px;
  border-left: 3px solid #303030;
  border-right: 3px solid #303030;
}
.icon_group {
  display: flex;
  flex-direction: column;
  align-items: center;
  gap: 4px;
  height: 41px;
  padding-top: 4px;
  border-top: 1px solid #6a6a6a;
  border-bottom: 1px solid #282828;
}

/* panels */
.panels {
  display: flex;
  flex-direction: column;
  flex: none;
  width: 223px;
  border-right: 1px solid #282828;
}
.panel {
  padding-bottom: 2px;
  border-bottom: 2px solid #303030;
}
.tabs {
  display: flex;
  height: 18px;
  background: #383838;
  box-shadow: inset 0 -1px #282828;
}
.tab {
  padding: 0 7px;
  border-right: 1px solid #282828;
  color: #9a9a9a;
  font-weight: 700;
}
.tab.on {
  color: #eee;
  background: #535353;
}
.panel_menu {
  width: 15px;
  height: 8px;
  margin: 5px 4px 0 auto;
  background:
    linear-gradient(#ccc, #ccc) 0 3px / 5px 1px no-repeat,
    linear-gradient(#ccc, #ccc) 1px 4px / 3px 1px no-repeat,
    repeating-linear-gradient(#ccc 0 1px, transparent 1px 2px) right top / 9px 8px no-repeat;
}
.color_body {
  display: flex;
  gap: 8px;
  height: 82px;
  padding: 9px 0 0 6px;
}
.channels {
  display: flex;
  flex-direction: column;
  gap: 5px;
  margin-top: -3px;
}
.channel {
  display: flex;
  align-items: center;
}
.channel label {
  width: 9px;
}
.channel .field {
  width: 47px;
}
.range {
  width: 96px;
  height: 17px;
  margin-right: 1px;
  background:
    linear-gradient(90deg, #000, var(--tone)) center 1px / calc(100% - 12px) 5px no-repeat,
    linear-gradient(#999, #999) center top / calc(100% - 10px) 7px no-repeat;
  appearance: none;
}
.range::-webkit-slider-thumb {
  width: 10px;
  height: 8px;
  margin-top: 8px;
  background: linear-gradient(#ccc, #888);
  clip-path: polygon(50% 0, 100% 60%, 100% 100%, 0 100%, 0 60%);
  appearance: none;
}
.red {
  --tone: #f00;
}
.green {
  --tone: #0f0;
}
.blue {
  --tone: #50f;
}
.spectrum {
  display: flex;
  height: 15px;
  margin: 0 17px 0 5px;
  border: 1px solid #333;
}
.ramp {
  flex: 1;
  background:
    linear-gradient(#fff, transparent 50%, #000),
    linear-gradient(90deg, #f00, #ff0 17%, #00a850 32%, #00a0f0 50%, #3a1090 66%, #f0108c 82%, #f00);
}
.bw {
  width: 8px;
  background: linear-gradient(#fff 50%, #000 50%);
}

.adjust {
  padding-bottom: 0;
}
.adjust h2 {
  margin: 4px 9px 5px;
  color: #fff;
  font: inherit;
  font-weight: 700;
}
.adj_row {
  display: flex;
  justify-content: center;
  height: 27px;
  padding-right: 16px;
}
.adj_row:last-child {
  height: 26px;
}
.adj_row button {
  width: 24px;
  height: 20px;
}

.layers {
  display: flex;
  flex-direction: column;
  flex: 1;
  min-height: 0;
  padding: 0;
  border: 0;
}
.layer_row {
  display: flex;
  align-items: center;
  flex: none;
  height: 28px;
  padding: 0 5px;
  border-top: 1px solid #666;
  border-bottom: 1px solid #363636;
}
.kind {
  position: relative;
}
.kind_icon {
  position: absolute;
  top: 5px;
  left: 6px;
}
.dim {
  color: #bbb;
  border-color: #424242;
  background:
    url("data:image/svg+xml,%3Csvg xmlns='http://www.w3.org/2000/svg' width='5' height='8'%3E%3Cpath d='M0 3h5L2.500 0zM0 5h5L2.500 8z' fill='%23aaa'/%3E%3C/svg%3E") right 4px center no-repeat,
    #5c5c5c;
  box-shadow: inset 0 1px #676767;
  opacity: 1;
}
.kind .select {
  width: 70px;
  padding-left: 20px;
}
.filters {
  display: flex;
  align-items: center;
  justify-content: space-between;
  flex: 1;
  padding-left: 11px;
}
.filter_type {
  color: #999;
  font: 700 14px/14px "Liberation Serif", serif;
}
.toggle {
  width: 9px;
  height: 17px;
  border: 1px solid #3a3a3a;
  background: linear-gradient(#777 50%, #454545 50%);
}
.blend {
  width: 111px;
}
.dim_label {
  color: #bbb;
}
.layer_row > label {
  margin: 0 5px 0 auto;
}
.combo {
  display: flex;
  width: 54px;
  height: 19px;
  border: 1px solid #404040;
  border-radius: 2px;
}
.combo input {
  flex: 1;
  min-width: 0;
  border: 0;
  background: #4a4a4a;
}
.combo button {
  width: 18px;
  border-left: 1px solid #404040;
  background: #5c5c5c;
}
.combo button::after {
  content: "";
  border: 3px solid transparent;
  border-top-color: #aaa;
  border-bottom: 0;
}
.lock_row {
  height: 30px;
}
.locks {
  display: flex;
  align-items: center;
  gap: 9px;
  margin-left: 10px;
}
.layer_list {
  display: flex;
  justify-content: flex-end;
  flex: 1;
  min-height: 0;
  background: #464646;
}
.scrollbar {
  width: 15px;
  background: linear-gradient(90deg, #3a3a3a, #444);
}
.layer_foot {
  display: flex;
  align-items: center;
  justify-content: space-between;
  flex: none;
  height: 19px;
  padding: 0 27px 0 19px;
  border-top: 1px solid #6a6a6a;
}
.layer_foot button {
  width: 14px;
}
.layer_foot .fx {
  color: #999;
  font: italic 14px/14px "Liberation Serif", serif;
}
```
